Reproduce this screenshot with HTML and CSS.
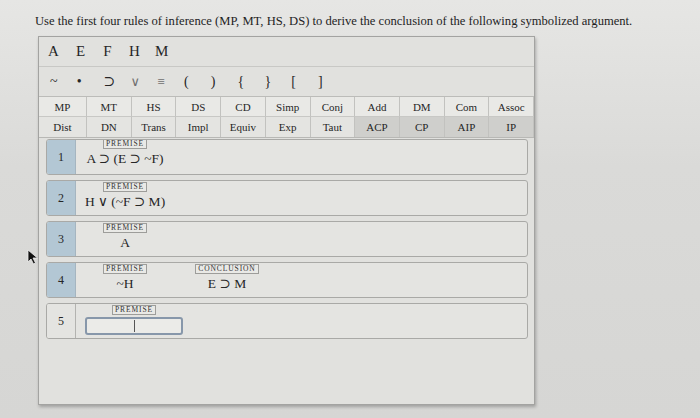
FILE: index.html
```html
<!DOCTYPE html>
<html>
<head>
<meta charset="utf-8">
<link rel="stylesheet" href="styles.css">
</head>
<body>
<p class="title">Use the first four rules of inference (MP, MT, HS, DS) to derive the conclusion of the following symbolized argument.</p>
<div class="panel">
  <div class="letters">
    <span>A</span><span>E</span><span>F</span><span>H</span><span>M</span>
  </div>
  <div class="symbols">
    <span>~</span><span>•</span><span>⊃</span><span class="light">∨</span><span class="light">≡</span><span>(</span><span>)</span><span>{</span><span>}</span><span>[</span><span>]</span>
  </div>
  <div class="rules">
    <span>MP</span><span>MT</span><span>HS</span><span>DS</span><span>CD</span><span>Simp</span><span>Conj</span><span>Add</span><span>DM</span><span>Com</span><span>Assoc</span>
    <span class="r2">Dist</span><span class="r2">DN</span><span class="r2">Trans</span><span class="r2">Impl</span><span class="r2">Equiv</span><span class="r2">Exp</span><span class="r2">Taut</span><span class="r2 dark">ACP</span><span class="r2 dark">CP</span><span class="r2 dark">AIP</span><span class="r2 dark">IP</span>
  </div>
  <div class="proof">
    <div class="line">
      <div class="num">1</div>
      <div class="cell first"><span class="tag">PREMISE</span><span class="formula">A ⊃ (E ⊃ ~F)</span></div>
    </div>
    <div class="line">
      <div class="num">2</div>
      <div class="cell"><span class="tag">PREMISE</span><span class="formula">H ∨ (~F ⊃ M)</span></div>
    </div>
    <div class="line">
      <div class="num">3</div>
      <div class="cell"><span class="tag">PREMISE</span><span class="formula">A</span></div>
    </div>
    <div class="line">
      <div class="num">4</div>
      <div class="cell"><span class="tag">PREMISE</span><span class="formula">~H</span></div>
      <div class="cell next"><span class="tag">CONCLUSION</span><span class="formula">E ⊃ M</span></div>
    </div>
    <div class="line">
      <div class="num plain">5</div>
      <div class="cell wide"><span class="tag">PREMISE</span><span class="input"><span class="caret"></span></span></div>
    </div>
  </div>
</div>
<svg class="pointer" width="12" height="16" viewBox="0 0 12 16"><path d="M1 1 L1 13 L4 10 L6.5 15 L8.5 14 L6 9 L10.5 9 Z" fill="#111" stroke="#eee" stroke-width="0.8"/></svg>
</body>
</html>
```
FILE: styles.css
```css
html, body {
  margin: 0;
  padding: 0;
}
body {
  width: 700px;
  height: 418px;
  overflow: hidden;
  position: relative;
  background: linear-gradient(180deg, #e6e6e4 0%, #dadad8 40%, #d6d6d4 100%);
  font-family: "Liberation Serif", "DejaVu Serif", serif;
  color: #262626;
}
.title {
  margin: 0;
  padding: 14px 0 0 35px;
  height: 22px;
  font-size: 12.6px;
  line-height: 14px;
  color: #1e1e1e;
}
.panel {
  margin-left: 38px;
  width: 495px;
  height: 367px;
  border: 1px solid #a3a3a1;
  background: #e1e1de;
  box-shadow: 1px 2px 3px rgba(0,0,0,0.25);
}
.letters {
  display: flex;
  height: 29px;
  align-items: center;
  padding-left: 8px;
  gap: 14px;
  font-size: 15px;
  border-bottom: 1px solid #c8c8c5;
}
.letters span {
  width: 13px;
  text-align: center;
}
.symbols {
  display: flex;
  height: 29px;
  align-items: center;
  padding-left: 6px;
  font-size: 14px;
  border-bottom: 1px solid #bcbcb9;
}
.symbols span {
  width: 26.8px;
  text-align: left;
  padding-left: 5px;
  box-sizing: border-box;
}
.symbols .light {
  color: #6f6f6f;
  font-size: 13px;
}
.rules {
  display: grid;
  grid-template-columns: 48px repeat(10, 1fr);
  grid-auto-rows: 20px;
  border-bottom: 1px solid #b8b8b5;
}
.rules span {
  display: flex;
  align-items: center;
  justify-content: center;
  font-size: 11px;
  background: #e9e9e6;
  border-right: 1px solid #c2c2bf;
  border-bottom: 1px solid #c8c8c5;
}
.rules span.r2 {
  background: #e4e4e1;
  border-bottom: none;
}
.rules span.dark {
  background: #cfcfcc;
}
.proof {
  display: flex;
  flex-direction: column;
  gap: 5px;
  padding: 1px 6px 0 7px;
}
.line {
  display: flex;
  height: 34px;
  border: 1px solid #a9a9a6;
  border-radius: 3px;
  background: #e4e4e1;
  overflow: hidden;
}
.num {
  width: 28px;
  flex: none;
  display: flex;
  align-items: center;
  justify-content: center;
  font-size: 12px;
  background: #b3c7d4;
  border-right: 1px solid #a5b5c0;
}
.num.plain {
  background: #e4e4e1;
  border-right: 1px solid #b3b3b0;
}
.cell {
  width: 90px;
  margin-left: 4px;
  display: flex;
  flex-direction: column;
  align-items: center;
  padding-top: 1px;
}
.cell.first {
  padding-top: 0;
  margin-top: -1px;
}
.cell.next {
  margin-left: 12px;
}
.cell.wide {
  width: 108px;
}
.tag {
  font-size: 7.5px;
  letter-spacing: 0.9px;
  line-height: 8px;
  padding: 0 2px;
  border: 1px solid #9d9d9a;
  background: #e9e9e6;
  color: #333;
}
.formula {
  font-size: 13.5px;
  line-height: 17px;
  margin-top: 1px;
}
.input {
  margin-top: 2px;
  width: 98px;
  height: 18px;
  box-sizing: border-box;
  border: 2px solid #8797aa;
  border-radius: 3px;
  background: #ebebe8;
  display: flex;
  align-items: center;
  justify-content: center;
}
.caret {
  width: 1px;
  height: 12px;
  background: #555;
}
.pointer {
  position: absolute;
  left: 27px;
  top: 249px;
}
```
